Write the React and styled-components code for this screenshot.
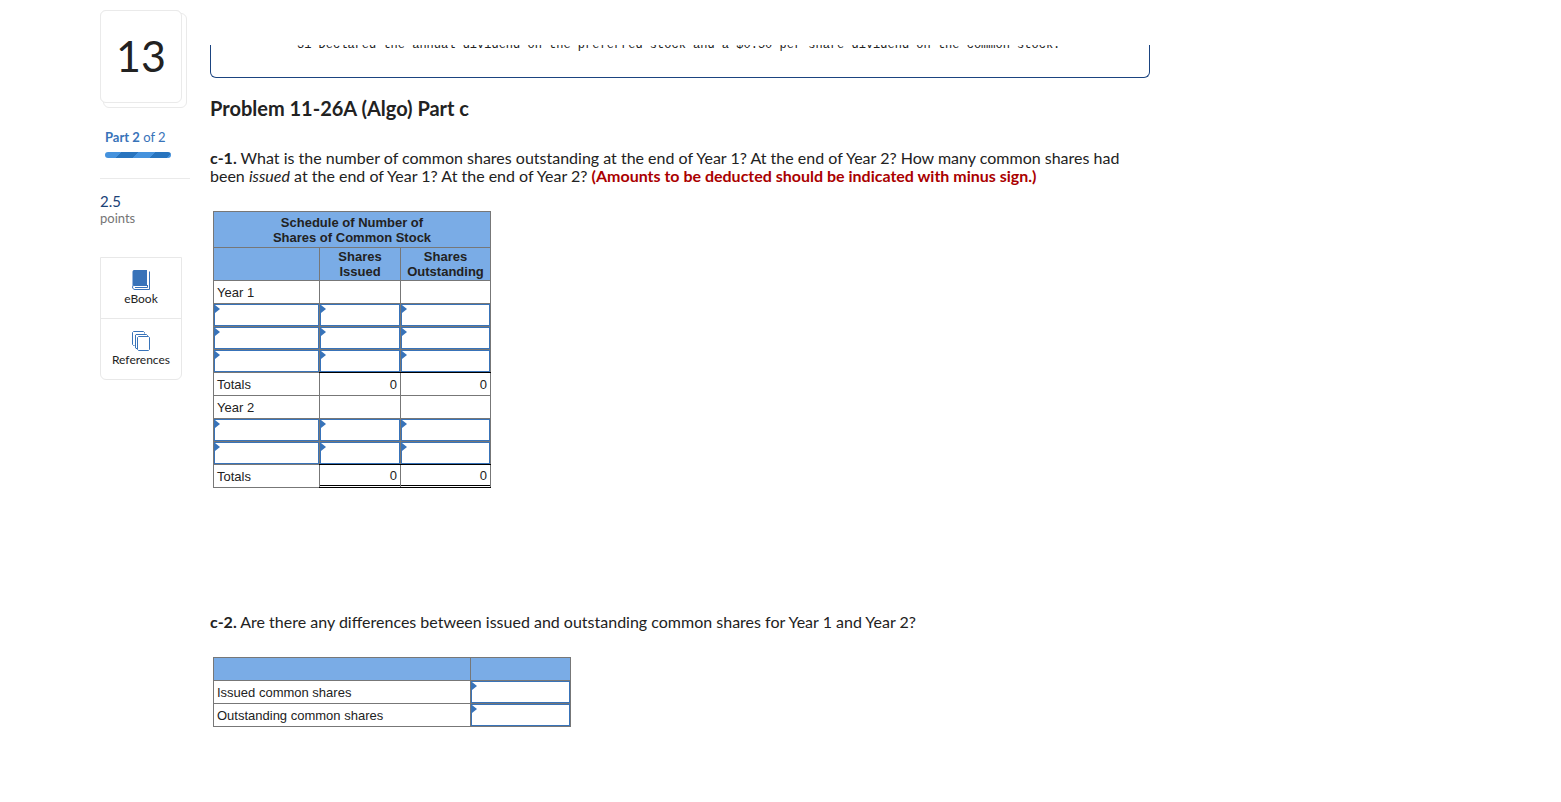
import styled, { createGlobalStyle } from "styled-components";

function App() {
    return (
        <Page>
            <GlobalStyle />
            <Sidebar>
                <QuestionCard>
                    <QuestionNumber>13</QuestionNumber>
                </QuestionCard>
                <Progress>
                    <PartLabel><b>Part 2</b> of 2</PartLabel>
                    <Bar />
                </Progress>
                <Points>
                    2.5
                    <small>points</small>
                </Points>
                <Tools>
                    <Tool type="button">
                        <BookIcon />
                        eBook
                    </Tool>
                    <Tool type="button">
                        <PagesIcon />
                        References
                    </Tool>
                </Tools>
            </Sidebar>

            <Content>
                <Events>
                    <span>31 Declared the annual dividend on the preferred stock and a $0.50 per share dividend on the common stock.</span>
                </Events>

                <Title>Problem 11-26A (Algo) Part c</Title>

                <Question>
                    <b>c-1.</b> What is the number of common shares outstanding at the end of Year 1? At the end of Year 2? How many common shares had been <i>issued</i> at the end of Year 1? At the end of Year 2? <Warning>(Amounts to be deducted should be indicated with minus sign.)</Warning>
                </Question>

                <Sheet $width="278px">
                    <colgroup>
                        <Col $width="106px" />
                        <Col $width="81px" />
                        <Col />
                    </colgroup>
                    <thead>
                        <Row $height="36px">
                            <HeadCell colSpan="3">Schedule of Number of<br />Shares of Common Stock</HeadCell>
                        </Row>
                        <Row $height="33px">
                            <HeadCell />
                            <HeadCell>Shares<br />Issued</HeadCell>
                            <HeadCell>Shares<br />Outstanding</HeadCell>
                        </Row>
                    </thead>
                    <tbody>
                        <YearRow label="Year 1" />
                        <AnswerRow name="Year 1 line 1" />
                        <AnswerRow name="Year 1 line 2" />
                        <AnswerRow name="Year 1 line 3" />
                        <Row>
                            <Cell>Totals</Cell>
                            <TotalCell>0</TotalCell>
                            <TotalCell>0</TotalCell>
                        </Row>
                        <YearRow label="Year 2" />
                        <AnswerRow name="Year 2 line 1" />
                        <AnswerRow name="Year 2 line 2" />
                        <Row>
                            <Cell>Totals</Cell>
                            <TotalCell $final>0</TotalCell>
                            <TotalCell $final>0</TotalCell>
                        </Row>
                    </tbody>
                </Sheet>

                <Question $second>
                    <b>c-2.</b> Are there any differences between issued and outstanding common shares for Year 1 and Year 2?
                </Question>

                <Sheet $width="358px">
                    <colgroup>
                        <Col $width="257px" />
                        <Col />
                    </colgroup>
                    <thead>
                        <Row>
                            <HeadCell />
                            <HeadCell />
                        </Row>
                    </thead>
                    <tbody>
                        <Row>
                            <Cell>Issued common shares</Cell>
                            <Answer label="Issued common shares" />
                        </Row>
                        <Row>
                            <Cell>Outstanding common shares</Cell>
                            <Answer label="Outstanding common shares" />
                        </Row>
                    </tbody>
                </Sheet>
            </Content>
        </Page>
    );
}

function YearRow({ label }) {
    return (
        <Row>
            <Cell>{label}</Cell>
            <Cell />
            <Cell />
        </Row>
    );
}

function AnswerRow({ name }) {
    return (
        <Row>
            <Answer label={`${name} description`} />
            <Answer label={`${name} shares issued`} />
            <Answer label={`${name} shares outstanding`} />
        </Row>
    );
}

function Answer({ label }) {
    return (
        <InputCell>
            <input type="text" aria-label={label} />
        </InputCell>
    );
}

function BookIcon() {
    return (
        <svg width="18" height="20" viewBox="0 0 18 20" fill="none" aria-hidden="true">
            <path d="M2 0H15V15H3C1.500 15 .5 16 .5 17V2C.5 1 1 0 2 0Z" fill="#3873b9" />
            <path d="M.5 17C.5 15.800 1.500 15.500 3 15.500H15.500M.5 17C.5 18.500 1.500 19.500 3 19.500H17.500V1.500" stroke="#3873b9" />
            <path d="M3 17.500H15.500V15" stroke="#3873b9" />
        </svg>
    );
}

function PagesIcon() {
    return (
        <svg width="18" height="20" viewBox="0 0 18 20" fill="none" stroke="#3873b9" aria-hidden="true">
            <path d="M2.500 14.500H1.500L.5 13.500V1.500L1.500.5H11.500L12.500 1.500V2.500" />
            <path d="M5.500 17.500H4L3.500 17V4L4 3.500H14.500L15.500 4.500V5" />
            <path d="M6.500 5.500H16.500L17.500 6.500V18.500L16.500 19.500H6.500L5.500 18.500V6.500Z" fill="#fff" />
        </svg>
    );
}

const GlobalStyle = createGlobalStyle`
    * {
        box-sizing: border-box;
    }

    body {
        margin: 0;
        background: #FFFFFF;
        color: #222222;
        font-family: "Lato", sans-serif;
    }
`;

const Page = styled.main`
    display: flex;
    gap: 20px;
    padding: 10px 20px 40px 100px;
`;

const Sidebar = styled.aside`
    flex: none;
    width: 90px;
`;

const QuestionCard = styled.div`
    position: relative;
    z-index: 0;
    width: 82px;
    height: 93px;
    border: 1px solid #EAEAEA;
    border-radius: 6px;

    &::before,
    &::after {
        content: "";
        position: absolute;
        z-index: -1;
        border-radius: 6px;
        background: #FFFFFF;
    }

    /* the card behind */
    &::before {
        inset: 2px -6px -6px 2px;
        border: 1px solid #EAEAEA;
    }

    &::after {
        inset: -1px;
        border: 1px solid #EAEAEA;
    }
`;

const QuestionNumber = styled.h1`
    margin: 0;
    font-weight: 400;
    font-size: 43px;
    line-height: 90px;
    text-align: center;
`;

const Progress = styled.div`
    padding: 25px 5px 20px;
    border-bottom: 1px solid #EAEAEA;
`;

const PartLabel = styled.div`
    font-size: 13px;
    line-height: 18px;
    color: #3873B9;
`;

const Bar = styled.div`
    width: 66px;
    height: 6px;
    margin-top: 6px;
    border-radius: 3px;
    background: repeating-linear-gradient(135deg, #4592DD 0 12px, #2874BE 12px 24px);
`;

const Points = styled.div`
    margin-top: 13px;
    font-size: 15px;
    line-height: 18px;
    color: #1B4277;

    small {
        display: block;
        font-size: 13px;
        line-height: 16px;
        color: #757575;
    }
`;

const Tools = styled.div`
    display: flex;
    flex-direction: column;
    width: 82px;
    margin-top: 31px;
    border: 1px solid #E8E8E8;
    border-radius: 0 0 6px 6px;
`;

const Tool = styled.button`
    display: flex;
    flex-direction: column;
    align-items: center;
    gap: 1px;
    height: 60px;
    padding: 12px 0 0;
    border: 0;
    background: none;

    font-family: inherit;
    font-size: 12px;
    line-height: 16px;
    color: #222222;
    cursor: pointer;

    & + & {
        height: 61px;
        border-top: 1px solid #E8E8E8;
    }
`;

const Content = styled.section`
    flex: 1;
    max-width: 940px;
    padding-top: 35px;
`;

/* only the last line of the scrolled journal stays in view */
const Events = styled.div`
    display: flex;
    flex-direction: column;
    justify-content: flex-end;
    height: 33px;
    padding: 0 86px 24px;
    overflow: hidden;
    border: 1px solid #1B4480;
    border-top: 0;
    border-radius: 0 0 6px 6px;

    font-family: "Liberation Mono", monospace;
    font-size: 12px;
    line-height: 16px;
    white-space: nowrap;
`;

const Title = styled.h2`
    margin: 18px 0 29px;
    font-weight: bold;
    font-size: 20px;
    line-height: 24px;
`;

const Question = styled.p`
    margin: ${(props) => (props.$second ? "126px" : "0")} 0 26px;
    font-size: 16px;
    line-height: 18px;
`;

const Warning = styled.b`
    color: #AA0000;
`;

const Sheet = styled.table`
    width: ${(props) => props.$width};
    margin-left: 3px;
    border-collapse: collapse;
    table-layout: fixed;

    font-family: "Liberation Sans", sans-serif;
    font-size: 13px;
    line-height: 15px;

    & + ${Question} {
        margin-top: 125px;
    }
`;

const Col = styled.col`
    width: ${(props) => props.$width || "auto"};
`;

const Row = styled.tr`
    height: ${(props) => props.$height || "23px"};
`;

const HeadCell = styled.th`
    padding: 0;
    border: 1px solid #777777;
    background: #7AACE6;
`;

const Cell = styled.td`
    padding: 0 3px;
    border: 1px solid #777777;
`;

const TotalCell = styled(Cell)`
    padding-bottom: ${(props) => (props.$final ? "2px" : "0")};
    border-top-color: #000000;
    border-top-style: double;
    border-bottom-color: ${(props) => (props.$final ? "#000000" : "#777777")};
    border-bottom-style: ${(props) => (props.$final ? "double" : "solid")};
    box-shadow: ${(props) => (props.$final ? "inset 0 -1px #FFFFFF, inset 0 -2px #000000" : "none")};
    text-align: right;
`;

const InputCell = styled.td`
    position: relative;
    height: 23px;
    padding: 0;
    border: 1px solid #777777;

    input {
        display: block;
        width: 100%;
        height: 22px;
        padding: 0 6px;
        border: 1px solid #3873B9;
        background: #FFFFFF;
        font: inherit;
        outline: none;
    }

    &::before {
        content: "";
        position: absolute;
        top: 1px;
        left: 1px;
        border: solid transparent;
        border-width: 4px 0 4px 5px;
        border-left-color: #3873B9;
    }
`;

export default App;
